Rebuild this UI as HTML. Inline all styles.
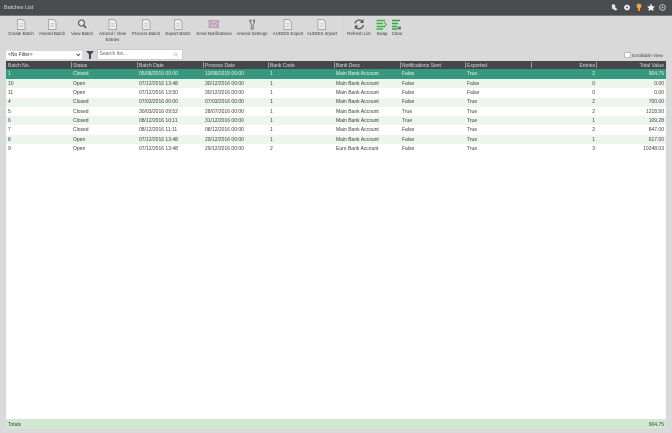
<!DOCTYPE html>
<html><head><meta charset="utf-8"><style>
html,body{margin:0;padding:0}
body{width:672px;height:433px;overflow:hidden;background:#d9d9d9;position:relative;font-family:"Liberation Sans",sans-serif;font-size:5px;color:#3a3a3a}
.abs{position:absolute}
#title{left:0;top:0;width:672px;height:15px;background:#4a4b4f;border-bottom:1px solid #77787a}
#title span{position:absolute;left:4px;top:4.5px;color:#ddd;font-size:5.4px;line-height:7px}
.lb{position:absolute;top:31px;text-align:center;line-height:6px;font-size:4.4px;color:#3a3a3a;transform:translateX(-50%);white-space:nowrap}
svg{position:absolute;overflow:visible}
#grid{left:6px;top:61px;width:660px;height:368px;background:#fff}
#head{position:absolute;left:0;top:0;width:660px;height:8px;background:#46474b;color:#ddd}
#head span{position:absolute;top:1.7px;line-height:6px;white-space:nowrap}
#head i{position:absolute;top:1px;width:1px;height:6px;background:#99a}
.r{position:absolute;left:0;width:660px;height:9.3px;line-height:9.3px;white-space:nowrap}
.r span{position:absolute;top:.9px}
.g{background:#edf6ed}
.s{background:#36997f;color:#e8f5f0}
.a{left:2px}.b{left:67px}.c{left:133px}.d{left:199px}.e{left:264px}.f{left:330px}.h{left:396px}.j{left:461px}
.k{right:71px}.l{right:2px}
#tot{position:absolute;left:0;top:358px;width:660px;height:10px;background:#cfe8cf;line-height:11px}
#tot span{top:.8px}
</style></head><body>
<div class="abs" id="title"><span>Batches List</span></div>

<svg style="left:0;top:0" width="672" height="60" viewBox="0 0 672 60">
<defs><g id="doc"><path d="M0 0H5L7.5 2.5V10H0Z" fill="#eeeeee" stroke="#8f9296" stroke-width=".7"/><path d="M1.8 4H5.7M1.8 5.6H5.7M1.8 7.2H5.7" stroke="#b5b7ba" stroke-width=".5"/></g></defs>
<use href="#doc" x="17.5" y="19.5"/>
<use href="#doc" x="48.5" y="19.5"/>
<circle cx="81.5" cy="23" r="3" fill="#e8e8e8" stroke="#62666a" stroke-width="1.3"/><path d="M83.7 25.2L86 28" stroke="#55595d" stroke-width="1.6"/>
<use href="#doc" x="109" y="19.5"/>
<use href="#doc" x="142.5" y="19.5"/>
<use href="#doc" x="174.5" y="19.5"/>
<rect x="209" y="20.5" width="9.5" height="7" fill="#d9b8d6" stroke="#9a7a9a" stroke-width=".5"/><path d="M209 20.5L213.7 24.5L218.5 20.5M209 27.5L212 23.5M218.5 27.5L215.5 23.5" fill="none" stroke="#8f6f90" stroke-width=".5"/>
<path d="M250 19.5V22.5L251.3 24V29H253.2V24L254.5 22.5V19.5M251 19.5V22M253.5 19.5V22" fill="none" stroke="#6d7175" stroke-width=".9"/>
<use href="#doc" x="284" y="19.5"/>
<use href="#doc" x="318" y="19.5"/>
<path d="M355 23.5A4.3 4.3 0 0 1 362.3 21.3M363.3 25A4.3 4.3 0 0 1 356 27.5" fill="none" stroke="#55595c" stroke-width="1.3"/><path d="M363.5 19V23H359.8ZM354.8 29.5V25.5H358.5Z" fill="#55595c"/>
<path d="M376.5 20.5H385M376.5 23.5H383M376.5 26.5H385M376.5 29H383" stroke="#3cb54a" stroke-width="1.5"/><path d="M384 22L386.5 24.5L384 27" fill="none" stroke="#666" stroke-width=".7"/>
<path d="M392 20.5H400M392 23.5H398M392 26.5H397M392 29H397" stroke="#2fa544" stroke-width="1.5"/><rect x="397.5" y="26.5" width="3.5" height="3" fill="#777"/>
<path d="M343.5 17V39" stroke="#cfcfcf" stroke-width=".6"/>
<path d="M0 44.7H672" stroke="#cfcfcf" stroke-width=".5"/>
<path d="M86 51H94L91 54.5V59H89V54.5Z" fill="#44474b"/>
<path d="M612 5L616 8L617.5 9.5L615.5 10.5L612 8.5Z" fill="#e6e6e6"/><circle cx="613.5" cy="6" r="1.8" fill="#e6e6e6"/>
<circle cx="627" cy="7.5" r="2.9" fill="#f0f0f0"/><circle cx="627" cy="7.5" r="1" fill="#55575a"/>
<circle cx="639" cy="6" r="2.4" fill="#f2a63b"/><rect x="638" y="8" width="2" height="3" fill="#e8a030"/>
<path d="M651 3.6L652.2 6.2L655 6.5L653 8.4L653.6 11L651 9.7L648.4 11L649 8.4L647 6.5L649.8 6.2Z" fill="#f5f5f5"/>
<circle cx="662.5" cy="7.5" r="2.8" fill="none" stroke="#d0d0d0" stroke-width=".9"/><circle cx="662.5" cy="7.5" r=".9" fill="#d0d0d0"/>
</svg>

<div class="lb" style="left:21px">Create Batch</div>
<div class="lb" style="left:52px">Amend Batch</div>
<div class="lb" style="left:82px">View Batch</div>
<div class="lb" style="left:112.5px">Amend / View<br>Entries</div>
<div class="lb" style="left:146px">Process Batch</div>
<div class="lb" style="left:178px">Export Batch</div>
<div class="lb" style="left:214px">Send Notifications</div>
<div class="lb" style="left:252px">Amend Settings</div>
<div class="lb" style="left:288px">AUDDIS Export</div>
<div class="lb" style="left:322px">AUDDIS Import</div>
<div class="lb" style="left:359px">Refresh List</div>
<div class="lb" style="left:382px">Swap</div>
<div class="lb" style="left:397px">Clear</div>

<div class="abs" style="left:6px;top:50.5px;width:76px;height:8.5px;background:#fff;line-height:9.5px;color:#333"><span style="margin-left:2px">&lt;No Filter&gt;</span></div>
<div class="abs" style="left:98px;top:50px;width:84px;height:9px;background:#fff;line-height:9.5px;color:#666;box-shadow:0 0 0 .5px #bbb"><span style="margin-left:1.5px">Search list...</span></div>
<svg style="left:0;top:0;z-index:2" width="672" height="60"><path d="M76.5 53.800L78.300 55.800L80.100 53.800" fill="none" stroke="#444" stroke-width=".8"/><circle cx="175.500" cy="54.300" r="1.500" fill="none" stroke="#aaa" stroke-width=".5"/><path d="M176.600 55.400L178 56.800" stroke="#aaa" stroke-width=".5"/></svg>

<div class="abs" style="left:625px;top:52.5px;width:4.5px;height:4.5px;background:#fff;box-shadow:0 0 0 .5px #999"></div>
<div class="abs" style="left:631.5px;top:52px;line-height:7px;font-size:4.6px;color:#444;white-space:nowrap">Scrollable View</div>

<div class="abs" id="grid">
<div id="head">
<span class="a">Batch No.</span><i style="left:65px"></i>
<span class="b">Status</span><i style="left:131px"></i>
<span class="c">Batch Date</span><i style="left:197px"></i>
<span class="d">Process Date</span><i style="left:262px"></i>
<span class="e">Bank Code</span><i style="left:328px"></i>
<span class="f">Bank Desc</span><i style="left:394px"></i>
<span class="h">Notifications Sent</span><i style="left:459px"></i>
<span class="j">Exported</span><i style="left:525px"></i>
<span class="k">Entries</span><i style="left:590px"></i>
<span class="l">Total Value</span>
</div>
<div class="r s" style="top:8px;height:10px"><span class="a">1</span><span class="b">Closed</span><span class="c">05/08/2015 00:00</span><span class="d">13/08/2015 00:00</span><span class="e">1</span><span class="f">Main Bank Account</span><span class="h">False</span><span class="j">True</span><span class="k">2</span><span class="l">904.75</span></div>
<div class="r g" style="top:18px"><span class="a">10</span><span class="b">Open</span><span class="c">07/12/2016 13:48</span><span class="d">30/12/2016 00:00</span><span class="e">1</span><span class="f">Main Bank Account</span><span class="h">False</span><span class="j">False</span><span class="k">0</span><span class="l">0.00</span></div>
<div class="r" style="top:27.3px"><span class="a">11</span><span class="b">Open</span><span class="c">07/12/2016 13:50</span><span class="d">30/12/2016 00:00</span><span class="e">1</span><span class="f">Main Bank Account</span><span class="h">False</span><span class="j">False</span><span class="k">0</span><span class="l">0.00</span></div>
<div class="r g" style="top:36.6px"><span class="a">4</span><span class="b">Closed</span><span class="c">07/03/2016 00:00</span><span class="d">07/03/2016 00:00</span><span class="e">1</span><span class="f">Main Bank Account</span><span class="h">False</span><span class="j">True</span><span class="k">2</span><span class="l">700.00</span></div>
<div class="r" style="top:45.9px"><span class="a">5</span><span class="b">Closed</span><span class="c">30/03/2016 09:52</span><span class="d">28/07/2016 00:00</span><span class="e">1</span><span class="f">Main Bank Account</span><span class="h">True</span><span class="j">True</span><span class="k">2</span><span class="l">1218.50</span></div>
<div class="r g" style="top:55.2px"><span class="a">6</span><span class="b">Closed</span><span class="c">08/12/2016 10:11</span><span class="d">31/12/2016 00:00</span><span class="e">1</span><span class="f">Main Bank Account</span><span class="h">True</span><span class="j">True</span><span class="k">1</span><span class="l">109.28</span></div>
<div class="r" style="top:64.5px"><span class="a">7</span><span class="b">Closed</span><span class="c">08/12/2016 11:11</span><span class="d">08/12/2016 00:00</span><span class="e">1</span><span class="f">Main Bank Account</span><span class="h">False</span><span class="j">True</span><span class="k">2</span><span class="l">847.00</span></div>
<div class="r g" style="top:73.8px"><span class="a">8</span><span class="b">Open</span><span class="c">07/12/2016 13:48</span><span class="d">29/12/2016 00:00</span><span class="e">1</span><span class="f">Main Bank Account</span><span class="h">False</span><span class="j">True</span><span class="k">1</span><span class="l">617.00</span></div>
<div class="r" style="top:83.1px"><span class="a">9</span><span class="b">Open</span><span class="c">07/12/2016 13:48</span><span class="d">29/12/2016 00:00</span><span class="e">2</span><span class="f">Euro Bank Account</span><span class="h">False</span><span class="j">True</span><span class="k">3</span><span class="l">10248.03</span></div>
<div id="tot"><span style="position:absolute;left:2px">Totals</span><span style="position:absolute;right:2px">904.75</span></div>
</div>
</body></html>
